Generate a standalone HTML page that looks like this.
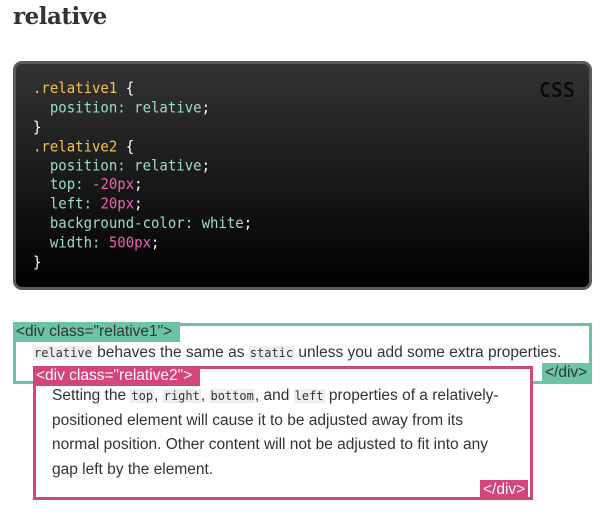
<!DOCTYPE html>
<html><head><style>
body{margin:0;width:605px;height:517px;background:#fff;position:relative;font-family:"Liberation Sans",sans-serif;overflow:hidden}
h1{position:absolute;left:13px;top:3px;margin:0;font:bold 23px "DejaVu Serif","Liberation Serif",serif;color:#333;letter-spacing:-0.5px}
.code{position:absolute;left:13px;top:61px;width:573px;height:223px;border:3px solid #5a5a5a;border-radius:9px;background:linear-gradient(#333,#000);}
.code pre{margin:0;position:absolute;left:17px;top:16px;font:14px/17.87px "DejaVu Sans Mono",monospace;color:#9adccb;transform:scaleY(1.08);transform-origin:0 0}
.s{color:#f5c34b}.w{color:#fff}.n{color:#f25fb5}
.css{position:absolute;right:14px;top:14px;font:bold 20px "DejaVu Sans Mono",monospace;color:#0a0a0a;text-shadow:0 0 1px #555}
.g{position:absolute;left:13px;top:323px;width:573px;height:55px;border:3px solid #6cc4a4}
.p{position:absolute;left:33px;top:366px;width:494px;height:128px;border:3px solid #d6457a;background:#fff}
.lab{position:absolute;color:#fff;font-size:15.5px;line-height:20px;padding:0 3px}
.gl{background:#6cc4a4;color:#333}
.pl{background:#d6457a}
code{font:12px "DejaVu Sans Mono",monospace;background:#eee;padding:0 1px;color:#333}
.t{position:absolute;font-size:15.5px;color:#333}
</style></head><body>
<h1>relative</h1>
<div class="code"><pre><span class="s">.relative1</span> <span class="w">{</span>
  position: relative<span class="w">;</span>
<span class="w">}</span>
<span class="s">.relative2</span> <span class="w">{</span>
  position: relative<span class="w">;</span>
  top: <span class="n">-20px</span><span class="w">;</span>
  left: <span class="n">20px</span><span class="w">;</span>
  background-color: white<span class="w">;</span>
  width: <span class="n">500px</span><span class="w">;</span>
<span class="w">}</span></pre><div class="css">CSS</div></div>
<div class="g"></div>
<div class="lab gl" style="left:13px;top:322px;width:161px;">&lt;div class="relative1"&gt;</div>
<div class="t" style="left:33px;top:344px;"><code>relative</code> behaves the same as <code>static</code> unless you add some extra properties.</div>
<div class="lab gl" style="left:542px;top:363px;">&lt;/div&gt;</div>
<div class="p"></div>
<div class="lab pl" style="left:33px;top:366px;width:161px;">&lt;div class="relative2"&gt;</div>
<div class="t" style="left:52px;top:384px;width:460px;line-height:24.5px;">Setting the <code>top</code>, <code>right</code>, <code>bottom</code>, and <code>left</code> properties of a relatively-positioned element will cause it to be adjusted away from its normal position. Other content will not be adjusted to fit into any gap left by the element.</div>
<div class="lab pl" style="left:480px;top:480px;">&lt;/div&gt;</div>
</body></html>
